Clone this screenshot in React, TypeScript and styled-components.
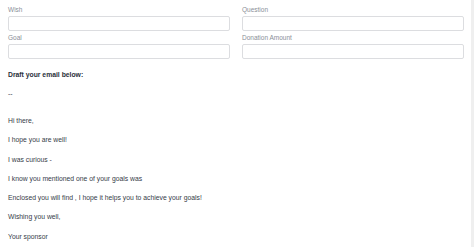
import styled, { createGlobalStyle } from 'styled-components';

const GlobalStyle = createGlobalStyle`
    html, body {
        margin: 0;
        padding: 0;
        background: #fff;
    }
    body {
        font-family: "Liberation Sans", Arial, sans-serif;
        color: #2d3340;
    }
`;

const Page = styled.div`
    box-sizing: border-box;
    width: 474px;
    height: 247px;
    overflow: hidden;
    padding: 6px 7px 0 8px;
    border-right: 3px solid #efefef;
`;

const FieldGrid = styled.div`
    display: grid;
    grid-template-columns: 1fr 1fr;
    column-gap: 12px;
    row-gap: 3px;
`;

const Field = styled.label`
    display: flex;
    flex-direction: column;
    gap: 2px;
`;

const Label = styled.span`
    font-size: 6.5px;
    line-height: 8px;
    color: #8a8f98;
`;

const Input = styled.input`
    box-sizing: border-box;
    height: 15px;
    width: 100%;
    border: 1px solid #dcdde0;
    border-radius: 2px;
    background: #fff;
    margin: 0;
    padding: 0 4px;
    outline: none;
`;

const Heading = styled.h3`
    margin: 11px 0 0;
    font-size: 6.8px;
    line-height: 9px;
    font-weight: bold;
    color: #2a2f3a;
`;

const Body = styled.div`
    margin-top: 10px;
`;

const Line = styled.p<{ $gap?: number }>`
    margin: ${p => p.$gap ?? 10.3}px 0 0;
    font-size: 6.8px;
    line-height: 9px;
    color: #363c48;
    white-space: pre;
`;

const fields = ['Wish', 'Question', 'Goal', 'Donation Amount'];

const lines = [
    'Hi there,',
    'I hope you are well!',
    'I was curious -',
    'I know you mentioned one of your goals was',
    'Enclosed you will find , I hope it helps you to achieve your goals!',
    'Wishing you well,',
    'Your sponsor',
];

export default function App() {
    return (
        <>
            <GlobalStyle />
            <Page>
                <FieldGrid>
                    {fields.map(name => (
                        <Field key={name}>
                            <Label>{name}</Label>
                            <Input />
                        </Field>
                    ))}
                </FieldGrid>
                <Heading>Draft your email below:</Heading>
                <Body>
                    <Line $gap={0}>--</Line>
                    {lines.map((text, i) => (
                        <Line key={i} $gap={i === 0 ? 18 : 10.3}>{text}</Line>
                    ))}
                </Body>
            </Page>
        </>
    );
}
